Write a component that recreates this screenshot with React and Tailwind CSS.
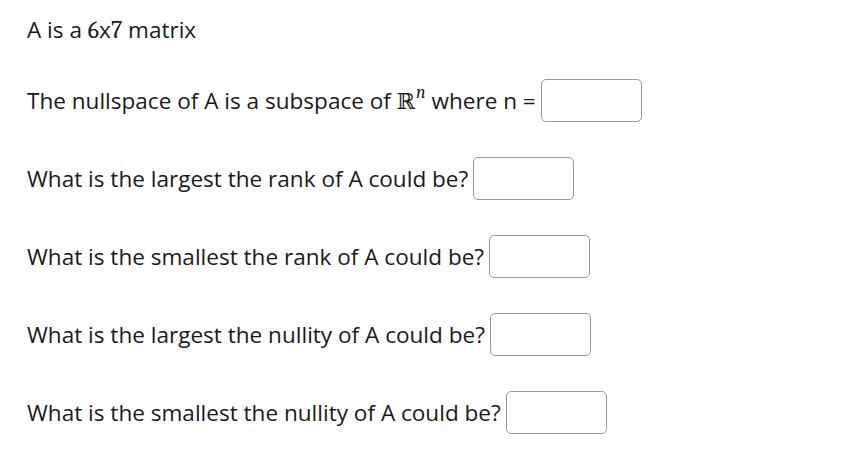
import React from 'react';

const rows = [
  'What is the largest the rank of A could be?',
  'What is the smallest the rank of A could be?',
  'What is the largest the nullity of A could be?',
  'What is the smallest the nullity of A could be?',
];

// answer field
const Box = () => (
  <input
    type="text"
    className="ml-[5px] w-[101px] h-[43px] border border-[#9a9a9a] rounded-[5px] bg-white outline-none shrink-0"
  />
);

export default function App() {
  return (
    <div className="w-[844px] h-[457px] bg-white text-[#1a1a1a] font-[family-name:'Open_Sans',sans-serif] text-[22.55px] pl-[27px] pt-[14px]">
      <div className="h-[32px] flex items-center">
        A is a&nbsp;
        <span className="font-serif text-[24px]">6</span>x
        <span className="font-serif text-[24px]">7</span>&nbsp;matrix
      </div>

      <div className="mt-[33px] h-[43px] flex items-center">
        <span>
          The nullspace of A is a subspace of{' '}
          <span className="font-[family-name:'DejaVu_Serif',serif] text-[22px]">ℝ</span>
          <sup className="font-serif italic text-[18px] -top-[0.6em] ml-[1px]">n</sup> where n =
        </span>
        <Box />
      </div>

      {rows.map((label) => (
        <div key={label} className="mt-[35px] h-[43px] flex items-center">
          <span>{label}</span>
          <Box />
        </div>
      ))}
    </div>
  );
}
